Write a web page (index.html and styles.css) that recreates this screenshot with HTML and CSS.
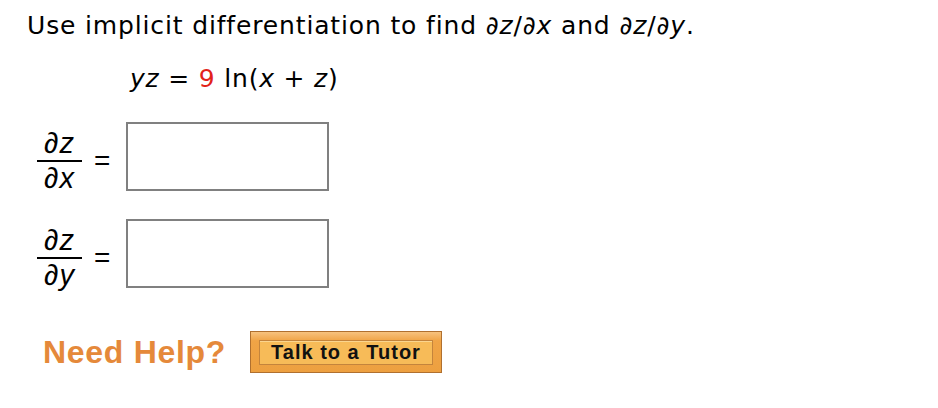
FILE: index.html
```html
<!DOCTYPE html>
<html>
<head>
<meta charset="utf-8">
<link rel="stylesheet" href="styles.css">
</head>
<body>
<div class="page">
  <p class="title">Use implicit differentiation to find <span class="m">∂<i>z</i>/∂<i>x</i></span> and <span class="m">∂<i>z</i>/∂<i>y</i></span>.</p>
  <p class="eq"><i>yz</i> = <span class="red">9</span> ln(<i>x</i> + <i>z</i>)</p>
  <div class="row row1">
    <div class="frac"><span class="num">∂<i>z</i></span><span class="den">∂<i>x</i></span></div>
    <span class="equals">=</span>
    <div class="box"></div>
  </div>
  <div class="row row2">
    <div class="frac"><span class="num">∂<i>z</i></span><span class="den">∂<i>y</i></span></div>
    <span class="equals">=</span>
    <div class="box"></div>
  </div>
  <div class="help">
    <span class="need">Need Help?</span>
    <div class="btn"><div class="btn-inner">Talk to a Tutor</div></div>
  </div>
</div>
</body>
</html>
```

FILE: styles.css
```css
html, body {
  margin: 0;
  padding: 0;
  background: #ffffff;
}
.page {
  width: 938px;
  height: 408px;
  font-family: "DejaVu Sans", Verdana, sans-serif;
  color: #000;
}
.title {
  margin: 0;
  padding: 12px 0 0 27px;
  font-size: 25px;
  line-height: 28px;
  letter-spacing: 0.85px;
}
.eq {
  margin: 0;
  padding: 25px 0 0 130px;
  font-size: 25px;
  line-height: 28px;
  letter-spacing: 0.8px;
}
.red {
  color: #e2231a;
}
.row {
  display: flex;
  align-items: flex-start;
  padding-left: 37px;
}
.row1 {
  margin-top: 29px;
}
.row2 {
  margin-top: 27px;
}
.frac {
  display: flex;
  flex-direction: column;
  align-items: center;
  width: 45px;
  margin-top: 7px;
  font-family: "Liberation Sans", Arial, sans-serif;
  font-size: 29px;
  line-height: 28px;
  letter-spacing: 1px;
}
.num {
  display: block;
  width: 45px;
  text-align: center;
  border-bottom: 2px solid #000;
  padding-bottom: 3px;
}
.den {
  display: block;
  padding-top: 2px;
}
.equals {
  display: block;
  width: 17px;
  font-family: "Liberation Sans", Arial, sans-serif;
  font-size: 28px;
  line-height: 28px;
  margin: 25px 15px 0 12px;
}
.box {
  width: 199px;
  height: 65px;
  border: 2px solid #808080;
  background: #fff;
}
.help {
  display: flex;
  align-items: flex-start;
  margin-top: 42px;
  padding-left: 43px;
}
.need {
  font-family: "Liberation Sans", Arial, sans-serif;
  font-weight: bold;
  font-size: 32px;
  line-height: 42px;
  letter-spacing: 0.7px;
  color: #e5893a;
  width: 207px;
}
.btn {
  width: 190px;
  height: 40px;
  border: 1px solid #b0702f;
  background: linear-gradient(#f7c27e 0%, #f0a446 22%, #eda040 100%);
  display: flex;
  align-items: flex-start;
  justify-content: center;
}
.btn-inner {
  margin-top: 8px;
  width: 172px;
  height: 23px;
  border: 1px solid #c4843c;
  background: #f7bb58;
  box-shadow: inset 0 1px 0 #fbd58e;
  font-family: "Liberation Sans", Arial, sans-serif;
  font-weight: bold;
  font-size: 20px;
  line-height: 23px;
  letter-spacing: 1px;
  text-align: center;
  color: #111;
}
```
